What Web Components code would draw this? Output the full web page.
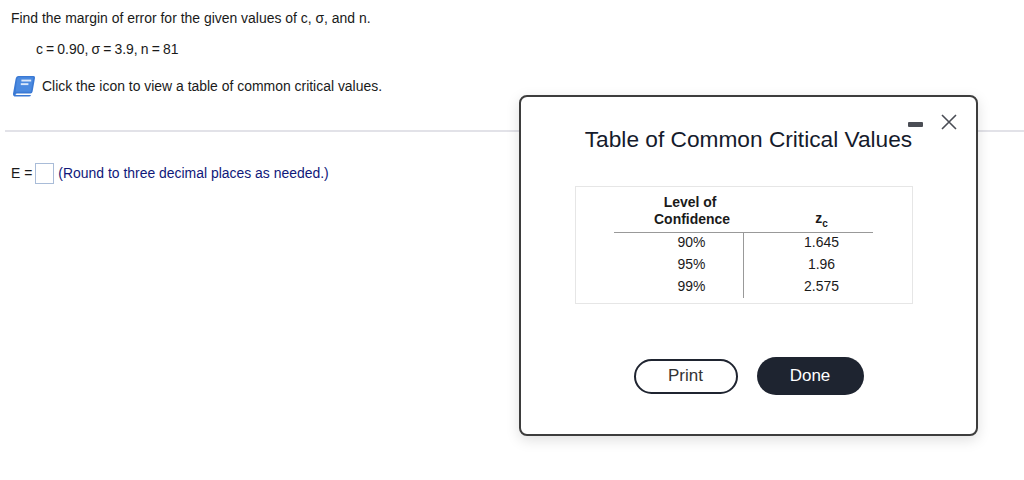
<!DOCTYPE html>
<html>
<head>
<meta charset="utf-8">
<title>Table of Common Critical Values</title>
<style>
html, body { margin: 0; padding: 0; background: #fff; }
body { width: 1024px; height: 480px; overflow: hidden; position: relative; font-family: "Liberation Sans", Arial, sans-serif; color: #1a1a1a; }
</style>
</head>
<body>
<question-pane></question-pane>
<critical-dialog heading="Table of Common Critical Values">
    <critical-table></critical-table>
</critical-dialog>

<script>
(function() {
    class BookIcon extends HTMLElement {
        constructor() {
            super();
            this.attachShadow({mode: 'open'});
            this.shadowRoot.innerHTML = `
<style>
:host { display: block; width: 24px; height: 22px; }
svg { display: block; }
</style>
<svg width="24" height="22" viewBox="0 0 24 22">
    <path d="M6.5 1 H21.5 Q23.4 1 23 3 L20.6 16.5 Q20.2 18.4 18.6 18.4 H5.2 Q3.6 18.4 3.5 19.2 Q3.5 19.9 4.8 19.9 H19 Q18.6 21.6 17 21.6 H3.5 Q0.8 21.6 1 18.8 L3.6 4 Q4.2 1 6.5 1 Z" fill="#3a79d4"/>
    <path d="M6.2 2.2 H21.4 L19 16.8 H3.6 L5 4 Z" fill="#4b8ae0"/>
    <rect x="9.4" y="4.6" width="9.8" height="1.9" fill="#dbe8fa"/>
    <rect x="8.8" y="8.2" width="7.6" height="1.9" fill="#dbe8fa"/>
</svg>`;
        }
    }

    class QuestionPane extends HTMLElement {
        constructor() {
            super();
            this.attachShadow({mode: 'open'});
            this.shadowRoot.innerHTML = `
<style>
:host { display: block; font: 13.95px/16px "Liberation Sans", Arial, sans-serif; color: #1a1a1a; }
.top { padding: 10px 0 0 11px; }
.given { margin: 15px 0 0 25px; word-spacing: -0.75px; }
.hint { display: flex; align-items: center; gap: 6px; margin: 17px 0 0 1px; height: 24px; }
hr { border: 0; height: 2px; background: #e2e2e8; margin: 32px 0 0 5px; }
.answer { display: flex; align-items: center; padding: 31px 0 0 11px; height: 20px; }
.box { width: 19px; height: 21px; border: 1px solid #a9bcd8; margin: 0 4px 0 3px; box-sizing: border-box; background: #fff; }
.note { color: #10187a; }
</style>
<div class="top">
    <div>Find the margin of error for the given values of c, σ, and n.</div>
    <div class="given">c = 0.90, σ = 3.9, n = 81</div>
    <div class="hint"><book-icon></book-icon><span>Click the icon to view a table of common critical values.</span></div>
</div>
<hr>
<div class="answer"><span>E =</span><span class="box"></span><span class="note">(Round to three decimal places as needed.)</span></div>`;
        }
    }

    class CriticalTable extends HTMLElement {
        constructor() {
            super();
            this.attachShadow({mode: 'open'});
            this.shadowRoot.innerHTML = `
<style>
:host { display: block; width: 338px; height: 118px; box-sizing: border-box; border: 1px solid #e6e6e6; padding: 7px 38px 0; font: 13.95px/17px "Liberation Sans", Arial, sans-serif; color: #1a1a1a; }
.grid { display: grid; grid-template-columns: 130px 129px; }
.head { font-weight: bold; text-align: center; padding: 0 0 4px 26px; border-bottom: 1px solid #999; display: flex; align-items: flex-end; justify-content: center; }
.head .first { margin-right: 4px; }
.cell { text-align: center; height: 22px; line-height: 19px; padding-left: 26px; }
.left { border-right: 1px solid #999; }
.last { height: 21px; }
sub { font-size: 10px; line-height: 0; }
.z { transform: translateY(-1px); }
</style>
<div class="grid">
    <div class="head"><span><div class="first">Level of</div>Confidence</span></div>
    <div class="head"><span class="z">z<sub>c</sub></span></div>
    <div class="cell left">90%</div><div class="cell">1.645</div>
    <div class="cell left">95%</div><div class="cell">1.96</div>
    <div class="cell left last">99%</div><div class="cell last">2.575</div>
</div>`;
        }
    }

    class CriticalDialog extends HTMLElement {
        constructor() {
            super();
            this.attachShadow({mode: 'open'});
            this.shadowRoot.innerHTML = `
<style>
:host { display: flex; flex-direction: column; align-items: center; position: absolute; left: 519px; top: 95px; width: 459px; height: 341px; box-sizing: border-box; border: 2px solid #3d3d3d; border-radius: 8px; background: #fff; box-shadow: 0 4px 14px rgba(0,0,0,.13); font-family: "Liberation Sans", Arial, sans-serif; }
h2 { margin: 28px 0 0 0; font-size: 22.7px; line-height: 28px; font-weight: normal; color: #151b2c; }
.min { position: absolute; left: 387px; top: 25px; width: 15px; height: 5px; background: #4a4d55; border-radius: 1px; }
.close { position: absolute; left: 420px; top: 17px; }
.body { margin: 33px 9px 0 0; }
.actions { display: flex; align-items: center; gap: 19px; margin: 53px 0 0 0; }
button { font: 17px "Liberation Sans", Arial, sans-serif; border-radius: 19px; box-sizing: border-box; padding: 0; }
.print { width: 104px; height: 35px; background: #fff; border: 2px solid #1f2430; color: #333; }
.done { width: 107px; height: 38px; background: #1e2430; border: 0; color: #fff; }
</style>
<div class="min"></div>
<svg class="close" width="16" height="16" viewBox="0 0 16 16"><path d="M1 1 L15 15 M15 1 L1 15" stroke="#4a4d55" stroke-width="1.6" fill="none"/></svg>
<h2></h2>
<div class="body"><slot></slot></div>
<div class="actions">
    <button class="print">Print</button>
    <button class="done">Done</button>
</div>`;
        }

        connectedCallback() {
            this.shadowRoot.querySelector('h2').textContent = this.getAttribute('heading');
        }
    }

    customElements.define('book-icon', BookIcon);
    customElements.define('question-pane', QuestionPane);
    customElements.define('critical-table', CriticalTable);
    customElements.define('critical-dialog', CriticalDialog);
})();
</script>
</body>
</html>
